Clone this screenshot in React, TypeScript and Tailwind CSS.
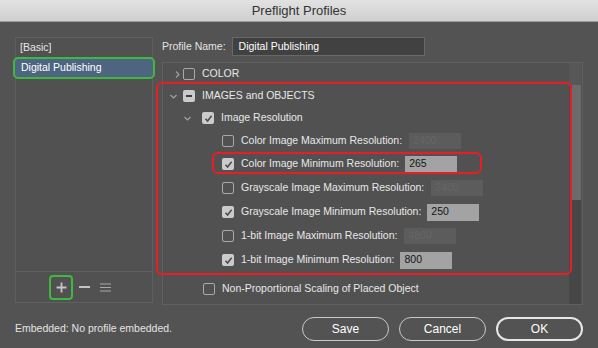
import React from "react";

type CheckState = "off" | "on" | "mixed";

const Check = ({ state }: { state: CheckState }) => {
  if (state === "off") {
    return (
      <span className="w-[12px] h-[12px] shrink-0 rounded-[2px] border border-[#a9a9a9]" />
    );
  }
  return (
    <span className="w-[12px] h-[12px] shrink-0 rounded-[2px] bg-[#cbcbcb] flex items-center justify-center">
      {state === "on" ? (
        <svg width="9" height="9" viewBox="0 0 9 9">
          <path d="M1.5 4.8 L3.6 7 L7.6 1.8" stroke="#4a4a4a" strokeWidth="1.5" fill="none" />
        </svg>
      ) : (
        <span className="w-[6px] h-[2px] bg-[#3d3d3d]" />
      )}
    </span>
  );
};

const Chevron = ({ down, w }: { down?: boolean; w: string }) => (
  <span className={`${w} shrink-0 flex items-center`}>
    <svg width="7" height="7" viewBox="0 0 7 7">
      {down ? (
        <path d="M0.5 2 L3.5 5 L6.5 2" stroke="#a5a5a5" strokeWidth="1.1" fill="none" />
      ) : (
        <path d="M2 0.5 L5 3.5 L2 6.5" stroke="#a5a5a5" strokeWidth="1.1" fill="none" />
      )}
    </svg>
  </span>
);

type Field = { value: string; enabled: boolean };

const Row = ({
  pad,
  h,
  chevron,
  chevronW = "w-[9px]",
  check,
  label,
  field,
}: {
  pad: string;
  h: string;
  chevron?: "right" | "down";
  chevronW?: string;
  check: CheckState;
  label: string;
  field?: Field;
}) => (
  <div className={`flex items-center shrink-0 ${pad} ${h}`}>
    {chevron && <Chevron down={chevron === "down"} w={chevronW} />}
    <Check state={check} />
    <span className="ml-[7px] whitespace-nowrap text-[#e8e8e8]">{label}</span>
    {field && (
      <span
        className={
          field.enabled
            ? "ml-[6px] w-[52px] h-[17px] px-[4px] flex items-center bg-[#a3a3a3] text-[#151515]"
            : "ml-[7px] w-[52px] h-[16px] px-[4px] flex items-center bg-[#5c5c5c] text-[#666666]"
        }
      >
        {field.value}
      </span>
    )}
  </div>
);

export default function App() {
  return (
    <div className="w-[598px] h-[348px] overflow-hidden bg-[#535353] flex flex-col font-['Liberation_Sans',Arial,sans-serif] text-[10.5px]">
      <div className="h-[22px] shrink-0 flex items-center justify-center bg-gradient-to-b from-[#e2e2e2] to-[#cfcfcf] border-b border-[#9c9c9c] text-[13px] text-[#333333]">
        Preflight Profiles
      </div>

      <div className="flex pt-[15px] pl-[15px] pr-[15px]">
        {/* profile list */}
        <div className="w-[138px] h-[266px] flex flex-col border border-[#5f5f5f] bg-[#515151]">
          <div className="flex-1 flex flex-col">
            <div className="h-[19px] pl-[4px] flex items-center text-[#e6e6e6]">[Basic]</div>
            <div className="-mx-[3px] h-[22px] pl-[6px] flex items-center rounded-[5px] border-2 border-[#3fb83f] bg-[#4e6582] text-white">
              Digital Publishing
            </div>
          </div>
          <div className="h-[31px] border-t border-[#5f5f5f] flex items-center pl-[33px] text-[#bdbdbd]">
            <span className="w-[24px] h-[25px] rounded-[4px] border-2 border-[#3fb83f] flex items-center justify-center">
              <svg width="11" height="11" viewBox="0 0 11 11">
                <path d="M5.5 0.5 V10.5 M0.5 5.5 H10.5" stroke="#c4c4c4" strokeWidth="1.8" />
              </svg>
            </span>
            <span className="ml-[6px] w-[11px] h-[2px] bg-[#c4c4c4]" />
            <svg className="ml-[10px]" width="11" height="9" viewBox="0 0 11 9">
              <path d="M0 1 H11 M0 4.5 H11 M0 8 H11" stroke="#a8a8a8" strokeWidth="1.2" />
            </svg>
          </div>
        </div>

        <div className="ml-[9px] flex-1 flex flex-col">
          <div className="h-[19px] flex items-center">
            <span className="text-[#e4e4e4]">Profile Name:</span>
            <span className="ml-[6px] w-[193px] h-[19px] pl-[6px] flex items-center bg-[#414141] border border-[#686868] text-white">
              Digital Publishing
            </span>
          </div>

          <div className="relative mt-[6px] h-[243px] flex border border-[#5f5f5f] bg-[#515151]">
            <div className="flex-1 flex flex-col overflow-hidden">
              <Row pad="pl-[11px]" h="h-[22px]" chevron="right" chevronW="w-[9px]" check="off" label="COLOR" />
              <Row pad="pl-[7px]" h="h-[22px]" chevron="down" chevronW="w-[13px]" check="mixed" label="IMAGES and OBJECTS" />
              <Row pad="pl-[21px]" h="h-[22px]" chevron="down" chevronW="w-[18px]" check="on" label="Image Resolution" />
              <Row pad="pl-[59px]" h="h-[23px]" check="off" label="Color Image Maximum Resolution:" field={{ value: "2400", enabled: false }} />
              <Row pad="pl-[59px]" h="h-[24px]" check="on" label="Color Image Minimum Resolution:" field={{ value: "265", enabled: true }} />
              <Row pad="pl-[59px]" h="h-[24px]" check="off" label="Grayscale Image Maximum Resolution:" field={{ value: "2400", enabled: false }} />
              <Row pad="pl-[59px]" h="h-[24px]" check="on" label="Grayscale Image Minimum Resolution:" field={{ value: "250", enabled: true }} />
              <Row pad="pl-[59px]" h="h-[24px]" check="off" label="1-bit Image Maximum Resolution:" field={{ value: "4800", enabled: false }} />
              <Row pad="pl-[59px]" h="h-[24px]" check="on" label="1-bit Image Minimum Resolution:" field={{ value: "800", enabled: true }} />
              <div className="h-[5px] shrink-0" />
              <Row pad="pl-[40px]" h="h-[24px]" check="off" label="Non-Proportional Scaling of Placed Object" />
              <Row pad="pl-[40px]" h="h-[24px]" check="off" label="" />
            </div>
            <div className="w-[12px] mr-[1px] shrink-0 flex flex-col">
              <div className="h-[22px] bg-[#575757]" />
              <div className="h-[115px] bg-[#4a4a4a] pl-[3px]">
                <div className="h-full bg-[#6b6b6b]" />
              </div>
              <div className="flex-1 bg-[#474747]" />
            </div>

            {/* annotations */}
            <div className="absolute left-[-7px] top-[19px] w-[416px] h-[193px] rounded-[6px] border-[2.5px] border-[#ec1c24]" />
            <div className="absolute left-[49px] top-[89px] w-[270px] h-[22px] rounded-[6px] border-[2.5px] border-[#ec1c24]" />
          </div>
        </div>
      </div>

      <div className="mt-[12px] flex items-center pl-[15px] pr-[15px]">
        <span className="text-[#e4e4e4]">Embedded: No profile embedded.</span>
        <div className="ml-auto flex gap-[10px] text-[12px] text-white">
          <span className="w-[87px] h-[24px] rounded-full border border-[#c9c9c9] flex items-center justify-center">Save</span>
          <span className="w-[87px] h-[24px] rounded-full border border-[#c9c9c9] flex items-center justify-center">Cancel</span>
          <span className="w-[87px] h-[24px] rounded-full border-2 border-[#e6e6e6] flex items-center justify-center">OK</span>
        </div>
      </div>
    </div>
  );
}
